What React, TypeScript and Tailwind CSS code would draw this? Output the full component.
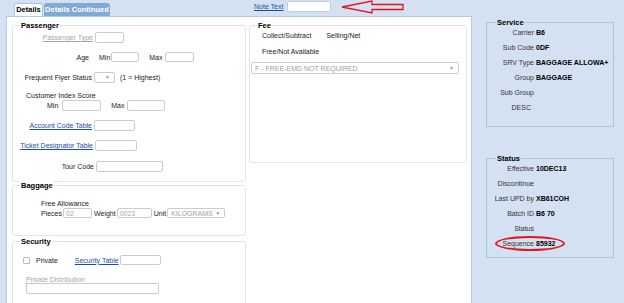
import React from "react"

const Input = ({ w, value, className = "" }: { w: string; value?: string; className?: string }) => (
  <div
    className={`${w} h-full shrink-0 bg-white border border-[#c8ccd2] rounded-[2px] px-[2px] flex items-center text-[#a8a8a8] ${className}`}
  >
    {value}
  </div>
)

const Select = ({ w, value }: { w: string; value?: string }) => (
  <div
    className={`${w} h-full shrink-0 bg-white border border-[#c8ccd2] rounded-[2px] pl-[3px] pr-[4px] flex items-center justify-between text-[#a0a0a0]`}
  >
    <span>{value}</span>
    <span className="text-[5px] text-[#999]">▼</span>
  </div>
)

const Legend = ({ children, ml = "ml-[7px]" }: { children: React.ReactNode; ml?: string }) => (
  <div className={`${ml} -mt-[5px] h-[9px] leading-[9px] self-start bg-white px-[1px] text-[7.5px] font-bold text-black`}>
    {children}
  </div>
)

const InfoRow = ({ label, value, mr = "" }: { label: string; value?: string; mr?: string }) => (
  <div className="h-[15px] flex items-center">
    <span className={`w-[47px] text-right text-[#333] ${mr}`}>{label}</span>
    {value && <span className="ml-[2px] font-bold text-black">{value}</span>}
  </div>
)

export default function App() {
  return (
    <div className="w-[624px] h-[303px] overflow-hidden bg-[#d3e1f2] flex font-['Liberation_Sans',Arial,sans-serif] text-[7px] text-[#222] leading-none">
      {/* left: tabs + white panel */}
      <div className="w-[472px] flex flex-col shrink-0">
        <div className="h-[16px] flex items-start shrink-0">
          <div className="ml-[14px] mt-[3px] h-[13px] w-[29px] bg-white border border-b-0 border-[#aac4e3] rounded-t-[3px] flex items-center justify-center font-bold text-[7.5px] text-black">
            Details
          </div>
          <div className="ml-[1px] mt-[3px] h-[13px] w-[66px] bg-[#80a9d4] rounded-t-[3px] flex items-center justify-center font-bold text-[7.5px] text-white">
            Details Continued
          </div>
          <div className="ml-[144px] mt-[1px] h-[11px] flex items-center">
            <span className="text-[#1d4ea6] underline">Note Text</span>
            <div className="ml-[4px] w-[44px] h-full bg-white border border-[#c3cfdd] rounded-[2px]" />
          </div>
          <svg className="ml-[10px]" width="64" height="15" viewBox="0 0 64 15">
            <path
              d="M1 7 L31 1 L31 4.5 L62 4.5 L62 9.5 L31 9.5 L31 13 Z"
              fill="none"
              stroke="#e2141c"
              strokeWidth="1.3"
              strokeLinejoin="miter"
            />
          </svg>
        </div>

        <div className="ml-[6px] flex-1 bg-white border border-b-0 border-[#b3cbe7] flex">
          {/* left column */}
          <div className="ml-[5px] w-[234px] flex flex-col">
            {/* Passenger */}
            <div className="mt-[8px] h-[157px] shrink-0 border border-[#e0e5eb] rounded-[3px] flex flex-col">
              <Legend>Passenger</Legend>
              <div className="mt-[2px] h-[11px] flex items-center">
                <span className="w-[80px] text-right text-[#a6a6a6] underline">Passenger Type</span>
                <Input w="w-[29px]" className="ml-[2px]" />
              </div>
              <div className="mt-[9px] h-[10px] flex items-center">
                <span className="w-[76px] text-right">Age</span>
                <span className="ml-[10px]">Min</span>
                <Input w="w-[28px]" className="ml-[1px]" />
                <span className="ml-[10px]">Max</span>
                <Input w="w-[29px]" className="ml-[2px]" />
              </div>
              <div className="mt-[10px] h-[11px] flex items-center">
                <span className="w-[79px] text-right">Frequent Flyer Status</span>
                <Select w="w-[21px] ml-[2px]" />
                <span className="ml-[5px]">(1 = Highest)</span>
              </div>
              <div className="mt-[8px] h-[8px] ml-[13px] flex items-center">Customer Index Score</div>
              <div className="mt-[1px] h-[11px] flex items-center">
                <span className="ml-[34px]">Min</span>
                <Input w="w-[39px]" className="ml-[4px]" />
                <span className="ml-[10px]">Max</span>
                <Input w="w-[38px]" className="ml-[2px]" />
              </div>
              <div className="mt-[9px] h-[11px] flex items-center">
                <span className="w-[79px] text-right text-[#1d4ea6] underline">Account Code Table</span>
                <Input w="w-[41px]" className="ml-[2px]" />
              </div>
              <div className="mt-[9px] h-[11px] flex items-center">
                <span className="w-[80px] text-right text-[#1d4ea6] underline">Ticket Designator Table</span>
                <Input w="w-[42px]" className="ml-[2px]" />
              </div>
              <div className="mt-[10px] h-[11px] flex items-center">
                <span className="w-[81px] text-right">Tour Code</span>
                <Input w="w-[67px]" className="ml-[2px]" />
              </div>
            </div>

            {/* Baggage */}
            <div className="mt-[3px] h-[51px] shrink-0 border border-[#e0e5eb] rounded-[3px] flex flex-col">
              <Legend>Baggage</Legend>
              <div className="mt-[9px] h-[8px] ml-[28px] flex items-center">Free Allowance</div>
              <div className="mt-[1px] h-[10px] flex items-center">
                <span className="ml-[28px]">Pieces</span>
                <Input w="w-[29px]" value="02" className="ml-[1px]" />
                <span className="ml-[2px]">Weight</span>
                <Input w="w-[35px]" value="0023" className="ml-[1px]" />
                <span className="ml-[2px]">Unit</span>
                <div className="ml-[1px] h-full">
                  <Select w="w-[58px]" value="KILOGRAMS" />
                </div>
              </div>
            </div>

            {/* Security */}
            <div className="mt-[5px] h-[80px] shrink-0 border border-b-0 border-[#e0e5eb] rounded-t-[3px] flex flex-col">
              <Legend>Security</Legend>
              <div className="mt-[9px] h-[10px] flex items-center">
                <div className="ml-[10px] w-[7px] h-[7px] border border-[#b8bcc2] bg-white rounded-[1px]" />
                <span className="ml-[6px]">Private</span>
                <span className="ml-[17px] text-[#1d4ea6] underline">Security Table</span>
                <Input w="w-[41px]" className="ml-[1px]" />
              </div>
              <div className="mt-[10px] h-[8px] ml-[13px] flex items-center text-[#a6a6a6] underline">
                Private Distribution
              </div>
              <div className="h-[11px] ml-[13px] flex">
                <Input w="w-[133px]" />
              </div>
            </div>
          </div>

          {/* Fee column */}
          <div className="ml-[3px] w-[218px]">
            <div className="mt-[8px] h-[138px] border border-[#e0e5eb] rounded-[3px] flex flex-col">
              <Legend>Fee</Legend>
              <div className="mt-[1px] h-[8px] flex items-center">
                <span className="ml-[12px]">Collect/Subtract</span>
                <span className="ml-[15px]">Selling/Net</span>
              </div>
              <div className="mt-[8px] h-[8px] ml-[12px] flex items-center">Free/Not Available</div>
              <div className="mt-[7px] h-[12px] ml-[1px] flex">
                <Select w="w-[208px]" value="F - FREE-EMD NOT REQUIRED" />
              </div>
            </div>
          </div>
        </div>
      </div>

      {/* right column */}
      <div className="ml-[14px] w-[128px] flex flex-col">
        <div className="mt-[22px] h-[105px] border border-[#a9c3e1] flex flex-col">
          <div className="ml-[9px] -mt-[5px] h-[9px] leading-[9px] self-start bg-[#d3e1f2] px-[1px] text-[7.5px] font-bold text-black">
            Service
          </div>
          <div className="-mt-[2px] flex flex-col">
            <InfoRow label="Carrier" value="B6" />
            <InfoRow label="Sub Code" value="0DF" />
            <InfoRow label="SRV Type" value="BAGGAGE ALLOWA+" />
            <InfoRow label="Group" value="BAGGAGE" />
            <InfoRow label="Sub Group" />
            <InfoRow label="DESC" mr="pr-[3px]" />
          </div>
        </div>

        <div className="mt-[31px] h-[100px] border border-[#a9c3e1] flex flex-col">
          <div className="ml-[9px] -mt-[5px] h-[9px] leading-[9px] self-start bg-[#d3e1f2] px-[1px] text-[7.5px] font-bold text-black">
            Status
          </div>
          <div className="-mt-[2px] flex flex-col">
            <InfoRow label="Effective" value="10DEC13" />
            <InfoRow label="Discontinue" />
            <InfoRow label="Last UPD by" value="XB61COH" />
            <InfoRow label="Batch ID" value="B6 70" />
            <InfoRow label="Status" />
            <div className="relative">
              <InfoRow label="Sequence" value="85932" />
              <span className="absolute left-[8px] top-[0px] w-[70px] h-[15px] border-2 border-[#e2141c] rounded-[50%]" />
            </div>
          </div>
        </div>
      </div>
    </div>
  )
}
